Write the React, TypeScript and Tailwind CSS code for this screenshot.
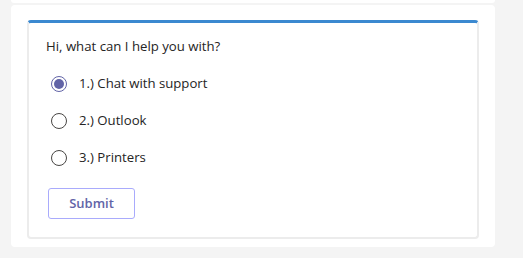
export default function App() {
  const options = ['1.) Chat with support', '2.) Outlook', '3.) Printers']
  const selected = 0

  return (
    <div className="h-[258px] w-[523px] bg-[#f4f4f4] font-['Open_Sans',sans-serif]">
      <div className="ml-[11px] h-[3px] w-[484px] rounded-b bg-white" />
      <div className="ml-[11px] mt-[2px] h-[242px] w-[484px] rounded bg-white px-4 pt-[15px]">
        <div className="h-[219px] w-[452px] rounded border-2 border-t-[3px] border-[#ececec] border-t-[#3b89d0] px-[17px] pt-[14px]">
          <p className="text-[13.2px] text-[#252424]">Hi, what can I help you with?</p>
          <div className="mt-[9px] flex flex-col">
            {options.map((opt, i) => (
              <label key={opt} className="flex h-[37px] items-center gap-[12px] text-[13.2px] text-[#252424]">
                {i === selected ? (
                  <span className="ml-[5px] flex h-[16px] w-[16px] items-center justify-center rounded-full border border-[#6264a7]">
                    <span className="h-[10px] w-[10px] rounded-full bg-[#6264a7]" />
                  </span>
                ) : (
                  <span className="ml-[5px] h-[16px] w-[16px] rounded-full border border-[#484644]" />
                )}
                {opt}
              </label>
            ))}
          </div>
          <button className="mt-[11px] ml-[2px] h-[31px] w-[87px] rounded-[3px] border border-[#a9abfc] text-[13px] font-semibold text-[#6264a7]">
            Submit
          </button>
        </div>
      </div>
    </div>
  )
}
